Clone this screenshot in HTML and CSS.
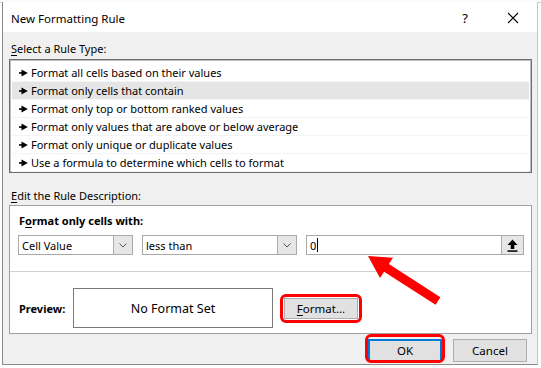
FILE: index.html
```html
<!DOCTYPE html>
<html>
<head>
<meta charset="utf-8">
<link rel="stylesheet" href="styles.css">
</head>
<body>
<div class="desk"></div>
<div class="dialog">
  <div class="titlebar">
    <span class="title">New Formatting Rule</span>
    <span class="help">?</span>
    <span class="close"><svg width="12" height="12" viewBox="0 0 12 12"><path d="M1 1L11 11M11 1L1 11" stroke="#000" stroke-width="1.1" fill="none"/></svg></span>
  </div>
  <div class="content">
    <div class="label"><u>S</u>elect a Rule Type:</div>
    <ul class="list">
      <li><svg class="ptr" width="9" height="8" viewBox="0 0 9 8"><rect x="0" y="3.2" width="4" height="1.6" fill="#000"/><path d="M2.5 0.5L8.8 4L2.5 7.5Z" fill="#000"/></svg>Format all cells based on their values</li>
      <li class="sel"><svg class="ptr" width="9" height="8" viewBox="0 0 9 8"><rect x="0" y="3.2" width="4" height="1.6" fill="#000"/><path d="M2.5 0.5L8.8 4L2.5 7.5Z" fill="#000"/></svg>Format only cells that contain</li>
      <li><svg class="ptr" width="9" height="8" viewBox="0 0 9 8"><rect x="0" y="3.2" width="4" height="1.6" fill="#000"/><path d="M2.5 0.5L8.8 4L2.5 7.5Z" fill="#000"/></svg>Format only top or bottom ranked values</li>
      <li><svg class="ptr" width="9" height="8" viewBox="0 0 9 8"><rect x="0" y="3.2" width="4" height="1.6" fill="#000"/><path d="M2.5 0.5L8.8 4L2.5 7.5Z" fill="#000"/></svg>Format only values that are above or below average</li>
      <li><svg class="ptr" width="9" height="8" viewBox="0 0 9 8"><rect x="0" y="3.2" width="4" height="1.6" fill="#000"/><path d="M2.5 0.5L8.8 4L2.5 7.5Z" fill="#000"/></svg>Format only unique or duplicate values</li>
      <li><svg class="ptr" width="9" height="8" viewBox="0 0 9 8"><rect x="0" y="3.2" width="4" height="1.6" fill="#000"/><path d="M2.5 0.5L8.8 4L2.5 7.5Z" fill="#000"/></svg>Use a formula to determine which cells to format</li>
    </ul>
    <div class="label label2"><u>E</u>dit the Rule Description:</div>
    <div class="desc">
      <div class="sub">F<u>o</u>rmat only cells with:</div>
      <div class="controls">
        <div class="combo c1"><span class="ctext">Cell Value</span><span class="dd"><svg width="8" height="5" viewBox="0 0 8 5"><path d="M0.5 0.5L4 4L7.5 0.5" stroke="#555" fill="none"/></svg></span></div>
        <div class="combo c2"><span class="ctext">less than</span><span class="dd"><svg width="8" height="5" viewBox="0 0 8 5"><path d="M0.5 0.5L4 4L7.5 0.5" stroke="#555" fill="none"/></svg></span></div>
        <div class="input"><span class="val">0</span><span class="caret"></span><span class="up"><svg width="11" height="13" viewBox="0 0 11 13"><path d="M5.5 0.5L10.5 6H7.3V10H3.7V6H0.5Z" fill="#000"/><rect x="0.5" y="11.3" width="10" height="1.5" fill="#000"/></svg></span></div>
      </div>
      <div class="sep"></div>
      <div class="prow">
        <span class="plabel">Preview:</span>
        <div class="pbox">No Format Set</div>
        <button class="btn fmt mark"><u>F</u>ormat...</button>
      </div>
    </div>
    <div class="actions">
      <button class="btn ok mark">OK</button>
      <button class="btn cancel">Cancel</button>
    </div>
  </div>
</div>
<svg class="arrow" width="541" height="368" viewBox="0 0 541 368">
  <polygon points="368,256 393,257.8 388.9,264.1 440.4,297.2 435.6,304.8 384.1,271.7 380,278" fill="#f00"/>
</svg>
</body>
</html>
```

FILE: styles.css
```css
* { box-sizing: border-box; }
html, body { margin: 0; padding: 0; }
body {
  width: 541px;
  height: 368px;
  overflow: hidden;
  background: #fff;
  font-family: "Noto Sans", "Open Sans", sans-serif;
  font-size: 11px;
  color: #000;
  position: relative;
}
u { text-decoration: underline; text-underline-offset: 2px; }
.desk {
  height: 3px;
  background: #fafafa;
  border-bottom: 1px solid #cfcfcf;
}
.dialog {
  margin-left: 2px;
  width: 536px;
  height: 363px;
  border-left: 1px solid #8a8a8a;
  border-right: 1px solid #c4c4c4;
  border-bottom: 1px solid #8a8a8a;
  display: flex;
  flex-direction: column;
  margin-top: -1px;
}
.titlebar {
  height: 30px;
  background: #fff;
  display: flex;
  align-items: center;
  padding-left: 8px;
  padding-top: 2px;
}
.title { flex: 1; font-size: 11.5px; }
.help { width: 20px; text-align: center; margin-right: 32px; font-size: 13px; }
.close { width: 12px; margin-right: 18px; display: flex; }
.content {
  flex: 1;
  background: #f0f0f0;
  padding: 0 5px 0 6px;
  display: flex;
  flex-direction: column;
}
.label { height: 16px; line-height: 16px; margin-top: 9px; padding-left: 2px; }
.list {
  list-style: none;
  margin: 2px 0 0 0;
  padding: 4px 2px 0 2px;
  height: 114px;
  background: #fff;
  border: 1px solid #6e6e6e;
  box-shadow: inset 0 0 0 1px #bdbdbd;
}
.list li {
  height: 18px;
  line-height: 18px;
  display: flex;
  align-items: center;
  padding-left: 7px;
  border-bottom: 1px solid #f3f3f3;
}
.list li.sel { background: #e5e5e5; }
.ptr { margin-right: 3px; flex: none; }
.label2 { margin-top: 15px; }
.desc {
  margin-top: 1px;
  height: 129px;
  background: #fff;
  border: 1px solid #a0a0a0;
  padding: 7px 0 0 0;
}
.sub { font-weight: bold; height: 16px; line-height: 16px; padding-left: 9px; }
.controls {
  display: flex;
  gap: 9px;
  margin-top: 6px;
  padding-left: 8px;
  height: 20px;
}
.combo, .input {
  height: 20px;
  border: 1px solid #a9a9a9;
  background: #fff;
  display: flex;
  align-items: center;
}
.c1 { width: 115px; }
.c2 { width: 155px; }
.input { width: 218px; }
.ctext { flex: 1; padding-left: 3px; }
.dd {
  width: 19px;
  height: 18px;
  border-left: 1px solid #adadad;
  background: #e6e6e6;
  display: flex;
  align-items: center;
  justify-content: center;
}
.val { padding-left: 3px; }
.caret { width: 1px; height: 14px; background: #000; margin-left: 1px; }
.up {
  margin-left: auto;
  width: 22px;
  height: 18px;
  background: #e6e6e6;
  border-left: 1px solid #adadad;
  display: flex;
  align-items: center;
  justify-content: center;
}
.sep { height: 1px; background: #d0d0d0; margin-top: 16px; }
.prow {
  display: flex;
  align-items: center;
  margin-top: 16px;
  padding-left: 9px;
}
.plabel { font-weight: bold; width: 54px; }
.pbox {
  width: 200px;
  height: 40px;
  border: 1px solid #7a7a7a;
  display: flex;
  align-items: center;
  justify-content: center;
  font-size: 12.5px;
}
.btn {
  font-family: inherit;
  font-size: 11.5px;
  color: #000;
  background: #e1e1e1;
  border: 1px solid #adadad;
  border-radius: 0;
  height: 21px;
  width: 74px;
  padding: 0;
  position: relative;
}
.fmt { margin-left: 11px; height: 21px; }
.mark::after {
  content: "";
  position: absolute;
  top: -5px; left: -5px; right: -5px; bottom: -5px;
  border: 3px solid #f00;
  border-radius: 6px;
}
.actions {
  display: flex;
  justify-content: flex-end;
  gap: 11px;
  margin-top: 5px;
  padding-right: 5px;
}
.ok { border: 2px solid #0078d7; height: 23px; }
.ok::after { top: -7px; bottom: -3px; }
.cancel { height: 23px; }
.arrow { position: absolute; left: 0; top: 0; pointer-events: none; }
```
